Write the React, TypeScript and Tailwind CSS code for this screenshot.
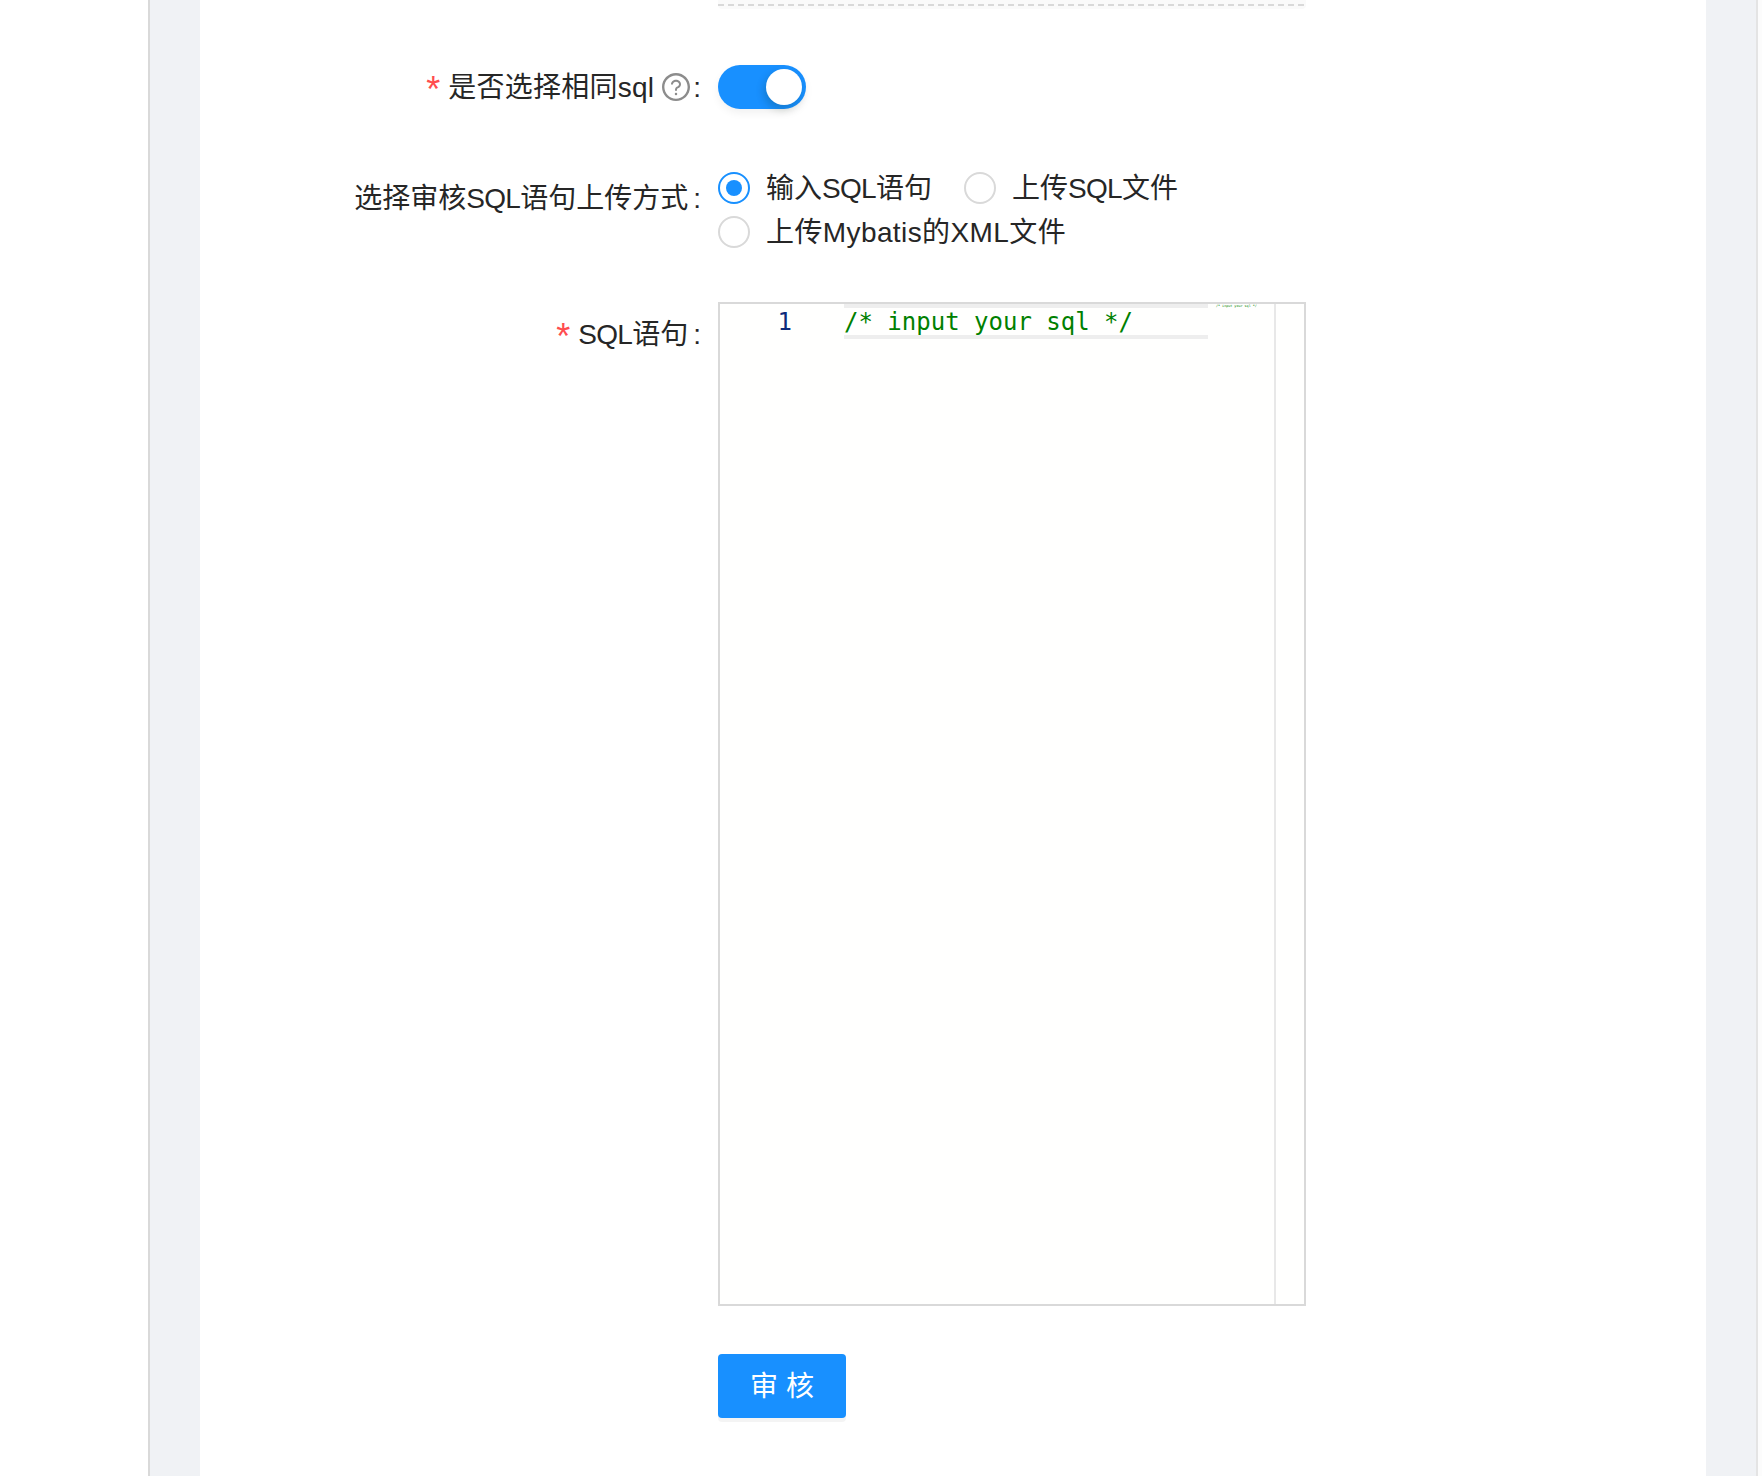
const cjk = "font-['Liberation_Sans','Noto_Sans_CJK_SC',sans-serif]";

function Sql() {
  return <span className="tracking-[-0.7px]">SQL</span>;
}

function Radio({ checked }: { checked?: boolean }) {
  return (
    <span
      className={
        "flex h-8 w-8 shrink-0 items-center justify-center rounded-full border-2 bg-white " +
        (checked ? "border-[#1890ff]" : "border-[#d9d9d9]")
      }
    >
      {checked && <span className="h-4 w-4 rounded-full bg-[#1890ff]" />}
    </span>
  );
}

function RadioItem({ children, checked, className }: { children: React.ReactNode; checked?: boolean; className?: string }) {
  return (
    <label className={"flex h-[44px] items-center gap-4 " + (className ?? "")}>
      <Radio checked={checked} />
      <span className="mt-[2px]">{children}</span>
    </label>
  );
}

function Label({ children, required }: { children: React.ReactNode; required?: boolean }) {
  return (
    <div className="flex h-16 w-[518px] shrink-0 items-center justify-end pt-[2px]">
      {required && <span className="mr-[8px] mt-[4px] text-[36px] leading-none text-[#ff4d4f]">*</span>}
      {children}
      <span className="ml-[5px] mr-[17px]">:</span>
    </div>
  );
}

function HelpIcon() {
  return (
    <svg viewBox="64 64 896 896" className="-mr-[2px] -mt-[3px] ml-2 h-7 w-7" fill="#8c8c8c">
      <path d="M512 64C264.6 64 64 264.6 64 512s200.6 448 448 448 448-200.6 448-448S759.4 64 512 64zm0 820c-205.4 0-372-166.6-372-372s166.6-372 372-372 372 166.6 372 372-166.6 372-372 372z" />
      <path d="M623.6 316.7C593.6 290.4 554 276 512 276s-81.6 14.5-111.6 40.7C369.2 344 352 380.7 352 420v7.6c0 4.4 3.6 8 8 8h48c4.4 0 8-3.6 8-8V420c0-44.1 43.1-80 96-80s96 35.9 96 80c0 31.1-22 59.6-56.1 72.7-21.2 8.1-39.2 22.3-52.1 40.9-13.1 19-19.9 41.8-19.9 64.9V620c0 4.4 3.6 8 8 8h48c4.4 0 8-3.6 8-8v-22.7a48.3 48.3 0 0 1 30.9-44.8c59-22.7 97.1-74.7 97.1-132.5.1-39.3-17.1-76-48.3-103.3z" />
      <path d="M472 732a40 40 0 1 0 80 0 40 40 0 1 0-80 0z" />
    </svg>
  );
}

export default function App() {
  return (
    <div className={"flex h-[1476px] overflow-hidden bg-white text-[28px] text-[#262626] " + cjk}>
      <div className="w-[148px] shrink-0 border-r-2 border-[#d9d9d9] box-content" />
      <div className="w-[50px] shrink-0 bg-[#f0f2f5]" />
      <main className="w-[1506px] shrink-0 bg-white">
        <div className="ml-[518px] flex h-[6px] w-[588px] flex-col justify-end rounded-b-[4px] bg-[#fafafa] shadow-[0_3px_0_#fafafa]">
          <div className="h-[2px] w-full bg-[repeating-linear-gradient(90deg,#d9d9d9_0,#d9d9d9_6px,transparent_6px,transparent_10px)]" />
        </div>

        <div className="mt-[49px] flex">
          <Label required>
            <span className="tracking-[0.25px]">是否选择相同sql</span>
            <HelpIcon />
          </Label>
          <div className="flex h-16 items-center">
            <button className="flex h-[44px] w-[88px] items-center justify-end rounded-full bg-[#1890ff] px-1 shadow-[0_4px_8px_rgba(0,0,0,0.06)]">
              <span className="h-9 w-9 rounded-full bg-white shadow-[-2px_4px_8px_rgba(0,35,11,0.2)]" />
            </button>
          </div>
        </div>

        <div className="mt-[47px] flex">
          <Label>
            <span>选择审核<Sql />语句上传方式</span>
          </Label>
          <div className="w-[588px]">
            <div className="flex">
              <RadioItem checked>输入<Sql />语句</RadioItem>
              <RadioItem className="ml-8">上传<Sql />文件</RadioItem>
            </div>
            <RadioItem><span className="tracking-[0.4px]">上传Mybatis的XML文件</span></RadioItem>
          </div>
        </div>

        <div className="mt-[48px] flex">
          <Label required>
            <span><Sql />语句</span>
          </Label>
          <div className="flex h-[1004px] w-[588px] border-2 border-[#d9d9d9] bg-[#fffffe]">
            <div className="flex h-full w-[556px] shrink-0 border-r-2 border-[#e8e8e8]">
              <div className="w-[124px] shrink-0 pr-[52px] pt-[1px] text-right font-['DejaVu_Sans_Mono',monospace] text-[24px] leading-[34px] text-[#0d2a7a]">
                1
              </div>
              <div className="h-[35px] w-[364px] shrink-0 border-y-[4px] border-[#eeeeee] font-['DejaVu_Sans_Mono',monospace] text-[24px] leading-[29px] text-[#008000]">
                <span className="block">/* input your sql */</span>
              </div>
              <span className="ml-[8px] whitespace-nowrap font-['DejaVu_Sans_Mono',monospace] text-[3.4px] leading-[4px] text-[#008000]">
                /* input your sql */
              </span>
            </div>
          </div>
        </div>

        <div className="mt-[48px] ml-[518px]">
          <button className="h-[64px] w-[128px] rounded-[4px] bg-[#1890ff] pt-[2px] text-[28px] text-white shadow-[0_4px_0_rgba(0,0,0,0.045)]">
            审 核
          </button>
        </div>
      </main>
      <div className="w-[50px] shrink-0 bg-[#f0f2f5]" />
      <div className="w-[2px] shrink-0 bg-[#e4e4e4]" />
      <div className="flex-1 bg-[#fcfcfc]" />
    </div>
  );
}
